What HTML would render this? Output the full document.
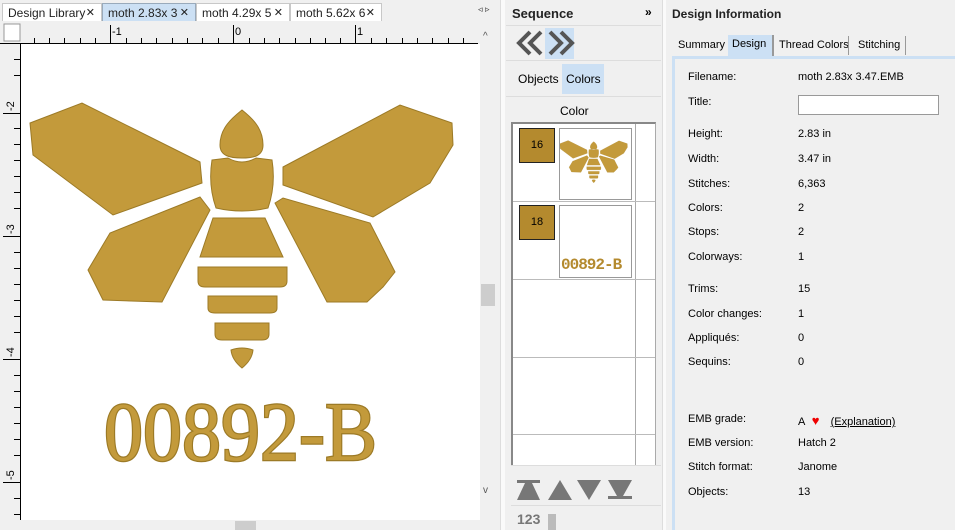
<!DOCTYPE html>
<html><head><meta charset="utf-8"><style>
*{margin:0;padding:0;box-sizing:border-box}
body{width:955px;height:530px;overflow:hidden;background:#f0f0f0;font-family:"Liberation Sans",sans-serif;font-size:12px;color:#000;position:relative}
.a{position:absolute}
.tab{position:absolute;top:3px;height:18px;border:1px solid #c8c8c8;border-bottom:none;background:#fff;font-size:12px;padding:2px 0 0 5px;color:#222;white-space:nowrap;overflow:hidden}
.tab span{position:absolute;right:6px;top:2px;font-size:11px}
.row{position:absolute;left:688px;font-size:11px}
.val{position:absolute;left:798px;font-size:11px}
</style></head><body>
<svg width="0" height="0" style="position:absolute"><defs>
<g id="moth" fill="#c39a3b" stroke="#9c7a26" stroke-width="1">
<polygon points="30,123 82,103 200,162 202,183 113,215 33,155"/>
<polygon points="283,167 400,105 452,123 453,145 430,183 373,217 283,185"/>
<polygon points="88,270 110,233 200,197 210,210 162,302 103,300"/>
<polygon points="275,203 283,198 370,223 395,272 383,287 367,302 327,302"/>
<path d="M242,110 C232,118 220,128 220,145 C220,156 230,158 242,158 C254,158 263,156 263,145 C263,128 252,118 242,110Z"/>
<path d="M212,160 L228,158 Q242,166 256,158 L272,160 Q276,185 268,208 Q242,214 216,208 Q208,185 212,160Z"/>
<polygon points="213,218 265,218 283,257 200,257"/>
<path d="M198,267 H287 V281 Q287,287 280,287 H205 Q198,287 198,281Z"/>
<path d="M208,296 H277 V308 Q277,313 270,313 H215 Q208,313 208,308Z"/>
<path d="M215,323 H269 V334 Q269,340 262,340 H222 Q215,340 215,334Z"/>
<path d="M231,350 Q242,346 253,350 Q252,360 242,368 Q232,360 231,350Z"/>
</g></defs></svg>

<!-- tabs -->
<div class="a" style="left:0;top:0;width:500px;height:21px;background:#f0f0f0"></div>
<div class="tab" style="left:2px;width:100px">Design Library <span>✕</span></div>
<div class="tab" style="left:102px;width:94px;background:#cce0f4;border-color:#9ab">moth 2.83x 3 <span>✕</span></div>
<div class="tab" style="left:196px;width:94px">moth 4.29x 5 <span>✕</span></div>
<div class="tab" style="left:290px;width:92px">moth 5.62x 6 <span>✕</span></div>
<div class="a" style="left:478px;top:4px;font-size:9px;color:#333">◃ ▹</div>

<!-- rulers -->
<svg class="a" style="left:0;top:21px" width="500" height="509">
<rect x="0" y="0" width="500" height="509" fill="#f0f0f0"/>
<rect x="20" y="23" width="460" height="476" fill="#fff"/>
<rect x="4" y="3" width="16" height="17" fill="#fff" stroke="#999"/>
<line x1="0" y1="22.5" x2="478" y2="22.5" stroke="#000"/>
<line x1="20.5" y1="23" x2="20.5" y2="499" stroke="#000"/>
<g stroke="#000">
<line x1="110.5" y1="4" x2="110.5" y2="22"/><line x1="233.5" y1="4" x2="233.5" y2="22"/><line x1="355.5" y1="4" x2="355.5" y2="22"/>
<g><line x1="34.5" y1="17" x2="34.5" y2="22"/><line x1="49.5" y1="17" x2="49.5" y2="22"/><line x1="64.5" y1="17" x2="64.5" y2="22"/><line x1="80.5" y1="17" x2="80.5" y2="22"/><line x1="95.5" y1="17" x2="95.5" y2="22"/><line x1="126.5" y1="17" x2="126.5" y2="22"/><line x1="141.5" y1="17" x2="141.5" y2="22"/><line x1="156.5" y1="17" x2="156.5" y2="22"/><line x1="172.5" y1="17" x2="172.5" y2="22"/><line x1="187.5" y1="17" x2="187.5" y2="22"/><line x1="202.5" y1="17" x2="202.5" y2="22"/><line x1="218.5" y1="17" x2="218.5" y2="22"/><line x1="249.5" y1="17" x2="249.5" y2="22"/><line x1="264.5" y1="17" x2="264.5" y2="22"/><line x1="279.5" y1="17" x2="279.5" y2="22"/><line x1="295.5" y1="17" x2="295.5" y2="22"/><line x1="310.5" y1="17" x2="310.5" y2="22"/><line x1="325.5" y1="17" x2="325.5" y2="22"/><line x1="340.5" y1="17" x2="340.5" y2="22"/><line x1="371.5" y1="17" x2="371.5" y2="22"/><line x1="386.5" y1="17" x2="386.5" y2="22"/><line x1="402.5" y1="17" x2="402.5" y2="22"/><line x1="417.5" y1="17" x2="417.5" y2="22"/><line x1="432.5" y1="17" x2="432.5" y2="22"/><line x1="448.5" y1="17" x2="448.5" y2="22"/><line x1="463.5" y1="17" x2="463.5" y2="22"/></g>
<line x1="3" y1="92.5" x2="20" y2="92.5"/><line x1="3" y1="215.5" x2="20" y2="215.5"/><line x1="3" y1="338.5" x2="20" y2="338.5"/><line x1="3" y1="461.5" x2="20" y2="461.5"/>
</g>
<text x="112" y="14" font-size="11" font-family="Liberation Sans">-1</text>
<text x="235" y="14" font-size="11" font-family="Liberation Sans">0</text>
<text x="357" y="14" font-size="11" font-family="Liberation Sans">1</text>
<text transform="translate(14,90) rotate(-90)" font-size="11" font-family="Liberation Sans">-2</text>
<text transform="translate(14,213) rotate(-90)" font-size="11" font-family="Liberation Sans">-3</text>
<text transform="translate(14,336) rotate(-90)" font-size="11" font-family="Liberation Sans">-4</text>
<text transform="translate(14,459) rotate(-90)" font-size="11" font-family="Liberation Sans">-5</text>
<rect x="480" y="0" width="17" height="499" fill="#f0f0f0"/>
<rect x="481" y="263" width="14" height="22" fill="#cdcdcd"/>
<rect x="20" y="499" width="460" height="10" fill="#f0f0f0"/>
<rect x="235" y="500" width="21" height="9" fill="#cdcdcd"/>
<text x="483" y="18" font-size="10" fill="#555">^</text>
<text x="483" y="472" font-size="10" fill="#555">v</text>
</svg>
<svg class="a" style="left:0;top:0" width="20" height="520">
<g stroke="#000">
<line x1="14" y1="59.5" x2="20" y2="59.5"/><line x1="14" y1="75.5" x2="20" y2="75.5"/><line x1="14" y1="128.5" x2="20" y2="128.5"/><line x1="14" y1="144.5" x2="20" y2="144.5"/><line x1="14" y1="160.5" x2="20" y2="160.5"/><line x1="14" y1="176.5" x2="20" y2="176.5"/><line x1="14" y1="192.5" x2="20" y2="192.5"/><line x1="14" y1="208.5" x2="20" y2="208.5"/><line x1="14" y1="252.5" x2="20" y2="252.5"/><line x1="14" y1="268.5" x2="20" y2="268.5"/><line x1="14" y1="284.5" x2="20" y2="284.5"/><line x1="14" y1="300.5" x2="20" y2="300.5"/><line x1="14" y1="316.5" x2="20" y2="316.5"/><line x1="14" y1="332.5" x2="20" y2="332.5"/><line x1="14" y1="375.5" x2="20" y2="375.5"/><line x1="14" y1="391.5" x2="20" y2="391.5"/><line x1="14" y1="407.5" x2="20" y2="407.5"/><line x1="14" y1="423.5" x2="20" y2="423.5"/><line x1="14" y1="439.5" x2="20" y2="439.5"/><line x1="14" y1="455.5" x2="20" y2="455.5"/><line x1="14" y1="498.5" x2="20" y2="498.5"/><line x1="14" y1="514.5" x2="20" y2="514.5"/>
</g></svg>

<!-- design -->
<svg class="a" style="left:0;top:0" width="480" height="520">
<use href="#moth"/>
<text x="104" y="460" font-family="Liberation Serif" font-size="84" fill="#c39a3b" stroke="#9c7a26" stroke-width="2.5" paint-order="stroke" textLength="273" lengthAdjust="spacingAndGlyphs">00892-B</text>
</svg>

<!-- Sequence panel -->
<div class="a" style="left:500px;top:0;width:5px;height:530px;background:#fafafa;border-left:1px solid #ddd"></div>
<div class="a" style="left:505px;top:0;width:157px;height:530px;background:#f0f0f0"></div>
<div class="a" style="left:512px;top:6px;font-weight:bold;font-size:13px;color:#222">Sequence</div>
<div class="a" style="left:645px;top:5px;font-weight:bold;font-size:12px">»</div>
<div class="a" style="left:506px;top:25px;width:155px;height:1px;background:#ddd"></div>
<div class="a" style="left:545px;top:28px;width:29px;height:31px;background:#cce0f4"></div>
<svg class="a" style="left:515px;top:28px" width="60" height="30" fill="none" stroke="#555" stroke-width="4"><path d="M15,4 L4,15 L15,26 M26,4 L15,15 L26,26"/><path d="M35,4 L46,15 L35,26 M46,4 L57,15 L46,26"/></svg>
<div class="a" style="left:506px;top:60px;width:155px;height:1px;background:#ddd"></div>
<div class="a" style="left:562px;top:64px;width:42px;height:30px;background:#cce0f4"></div>
<div class="a" style="left:518px;top:72px">Objects</div>
<div class="a" style="left:566px;top:72px">Colors</div>
<div class="a" style="left:506px;top:96px;width:155px;height:1px;background:#ddd"></div>
<div class="a" style="left:560px;top:104px">Color</div>
<div class="a" style="left:511px;top:122px;width:145px;height:343px;background:#fff;border:2px solid #888;border-bottom:none;border-right:1px solid #aaa"></div>
<div class="a" style="left:635px;top:124px;width:1px;height:341px;background:#aaa"></div>
<div class="a" style="left:513px;top:201px;width:142px;height:1px;background:#bbb"></div>
<div class="a" style="left:513px;top:279px;width:142px;height:1px;background:#bbb"></div>
<div class="a" style="left:513px;top:357px;width:142px;height:1px;background:#bbb"></div>
<div class="a" style="left:513px;top:434px;width:142px;height:1px;background:#bbb"></div>
<div class="a" style="left:519px;top:128px;width:36px;height:35px;background:#b48a2e;border:1px solid #222;font-size:11px;text-align:center;line-height:33px">16</div>
<div class="a" style="left:519px;top:205px;width:36px;height:35px;background:#b48a2e;border:1px solid #222;font-size:11px;text-align:center;line-height:33px">18</div>
<div class="a" style="left:559px;top:128px;width:73px;height:72px;border:1px solid #999;background:#fff"></div>
<div class="a" style="left:559px;top:205px;width:73px;height:73px;border:1px solid #999;background:#fff;color:#b48a2e;font-weight:bold;font-family:'Liberation Mono',monospace;font-size:16px;padding:50px 0 0 1px;letter-spacing:-1px">00892-B</div>
<svg class="a" style="left:560px;top:129px" width="72" height="70"><g transform="translate(-5,-5) scale(0.16)"><use href="#moth"/></g></svg>
<div class="a" style="left:511px;top:465px;width:150px;height:1px;background:#ddd"></div>
<svg class="a" style="left:515px;top:478px" width="120" height="24" fill="#777"><path d="M2,2H25V5H17L25,22H2L10,5H2Z"/><polygon points="45,2 57,22 33,22"/><polygon points="62,2 86,2 74,22"/><path d="M93,2H117L108,18H117V21H93V18H102Z"/></svg>
<div class="a" style="left:511px;top:505px;width:150px;height:1px;background:#ddd"></div>
<div class="a" style="left:517px;top:511px;font-weight:bold;font-size:14px;color:#777">123</div>
<div class="a" style="left:548px;top:514px;width:8px;height:16px;background:#bbb"></div>

<!-- Design Information -->
<div class="a" style="left:662px;top:0;width:4px;height:530px;background:#fafafa;border-left:1px solid #ddd"></div>
<div class="a" style="left:672px;top:7px;font-weight:bold;font-size:12px;color:#222">Design Information</div>
<div class="a" style="left:672px;top:35px;width:283px;height:20px">
<div class="a" style="left:6px;top:4px;font-size:11px">Summary</div>
<div class="a" style="left:56px;top:0;width:46px;height:21px;background:#cce0f4;border-right:2px solid #999"></div>
<div class="a" style="left:60px;top:3px;font-size:11px">Design</div>
<div class="a" style="left:107px;top:4px;font-size:11px">Thread Colors</div>
<div class="a" style="left:176px;top:1px;width:1px;height:19px;background:#999"></div>
<div class="a" style="left:186px;top:4px;font-size:11px">Stitching</div>
<div class="a" style="left:233px;top:1px;width:1px;height:19px;background:#999"></div>
</div>
<div class="a" style="left:672px;top:56px;width:283px;height:474px;background:#f0f0f0;border-left:3px solid #cce0f4;border-top:3px solid #cce0f4"></div>
<div class="row" style="top:71px">Filename:</div><div class="val" style="top:71px">moth 2.83x 3.47.EMB</div>
<div class="row" style="top:96px">Title:</div><div class="a" style="left:798px;top:95px;width:141px;height:20px;background:#fff;border:1px solid #999"></div>
<div class="row" style="top:128px">Height:</div><div class="val" style="top:128px">2.83 in</div>
<div class="row" style="top:153px">Width:</div><div class="val" style="top:153px">3.47 in</div>
<div class="row" style="top:178px">Stitches:</div><div class="val" style="top:178px">6,363</div>
<div class="row" style="top:202px">Colors:</div><div class="val" style="top:202px">2</div>
<div class="row" style="top:226px">Stops:</div><div class="val" style="top:226px">2</div>
<div class="row" style="top:251px">Colorways:</div><div class="val" style="top:251px">1</div>
<div class="row" style="top:283px">Trims:</div><div class="val" style="top:283px">15</div>
<div class="row" style="top:308px">Color changes:</div><div class="val" style="top:308px">1</div>
<div class="row" style="top:332px">Appliqués:</div><div class="val" style="top:332px">0</div>
<div class="row" style="top:356px">Sequins:</div><div class="val" style="top:356px">0</div>
<div class="row" style="top:413px">EMB grade:</div><div class="val" style="top:413px">A <span style="color:#e00;font-size:13px;margin:0 8px 0 4px">♥</span> <u>(Explanation)</u></div>
<div class="row" style="top:437px">EMB version:</div><div class="val" style="top:437px">Hatch 2</div>
<div class="row" style="top:461px">Stitch format:</div><div class="val" style="top:461px">Janome</div>
<div class="row" style="top:486px">Objects:</div><div class="val" style="top:486px">13</div>
</body></html>
